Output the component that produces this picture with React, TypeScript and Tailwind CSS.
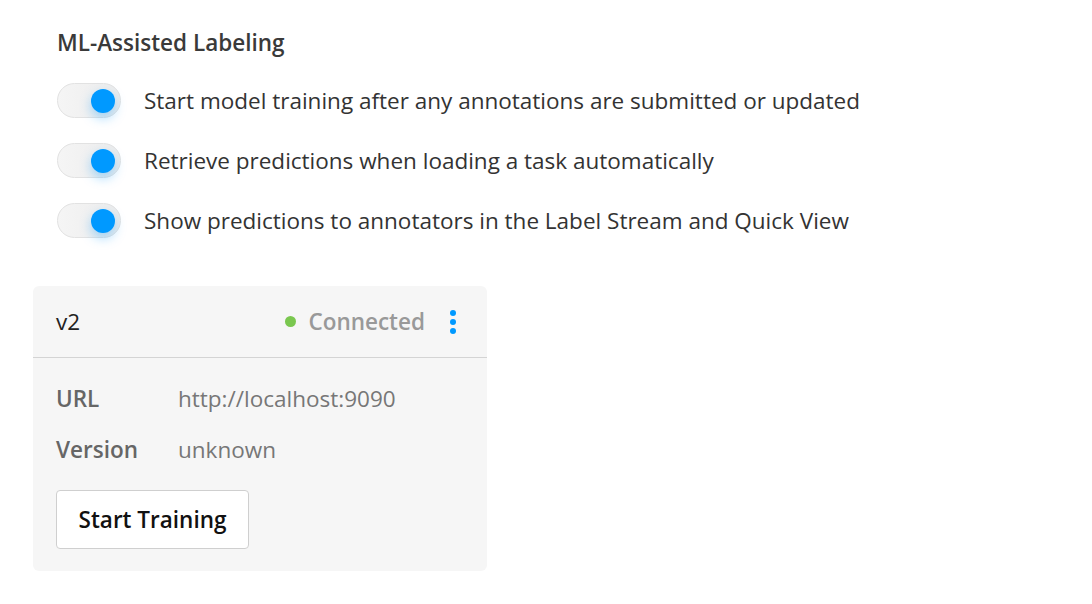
import React from "react";

function Toggle() {
  return (
    <div className="relative w-[64px] h-[35px] rounded-full border border-[#e2e2e2] bg-gradient-to-r from-[#f5f5f5] to-[#ececec] shrink-0">
      <div className="absolute left-[33px] top-[5px] w-[24px] h-[24px] rounded-full bg-[#0099ff] shadow-[0_5px_12px_rgba(0,153,255,0.35)]" />
    </div>
  );
}

const rows = [
  "Start model training after any annotations are submitted or updated",
  "Retrieve predictions when loading a task automatically",
  "Show predictions to annotators in the Label Stream and Quick View",
];

export default function App() {
  return (
    <div
      className="w-[1092px] h-[604px] bg-white text-[#333] pt-[27px] pl-[57px]"
      style={{ fontFamily: '"Open Sans", "Noto Sans", sans-serif' }}
    >
      <h2 className="text-[22.5px] leading-[32px] font-semibold text-[#3a3a3a]">ML-Assisted Labeling</h2>
      <div className="mt-[24px] flex flex-col gap-[25px]">
        {rows.map((r) => (
          <div key={r} className="flex items-center gap-[23px]">
            <Toggle />
            <span className="text-[22.5px] leading-[35px] text-[#333]">{r}</span>
          </div>
        ))}
      </div>
      <div className="mt-[48px] -ml-[24px] w-[454px] bg-[#f6f6f6] rounded-[6px]">
        <div className="h-[72px] flex items-center pl-[23px] pr-[31px] border-b border-[#d4d4d4]">
          <span className="text-[22.5px] text-[#222]">v2</span>
          <div className="ml-auto flex items-center">
            <span className="w-[11px] h-[11px] rounded-full bg-[#7ac74f]" />
            <span className="ml-[12px] text-[22.5px] text-[#999] font-semibold">Connected</span>
            <span className="ml-[25px] flex flex-col gap-[3px]">
              <span className="w-[6px] h-[6px] rounded-full bg-[#0099ff]" />
              <span className="w-[6px] h-[6px] rounded-full bg-[#0099ff]" />
              <span className="w-[6px] h-[6px] rounded-full bg-[#0099ff]" />
            </span>
          </div>
        </div>
        <div className="pl-[23px] pt-[24px] pb-[22px]">
          <div className="flex h-[33px] items-center">
            <span className="w-[122px] text-[22.5px] font-semibold text-[#666]">URL</span>
            <span className="text-[22.5px] text-[#777]">http://localhost:9090</span>
          </div>
          <div className="flex h-[33px] items-center mt-[18px]">
            <span className="w-[122px] text-[22.5px] font-semibold text-[#666]">Version</span>
            <span className="text-[22.5px] text-[#777]">unknown</span>
          </div>
          <button className="mt-[24px] w-[193px] h-[59px] bg-white border border-[#cfcfcf] rounded-[4px] text-[22.5px] font-semibold text-[#111]">
            Start Training
          </button>
        </div>
      </div>
    </div>
  );
}
